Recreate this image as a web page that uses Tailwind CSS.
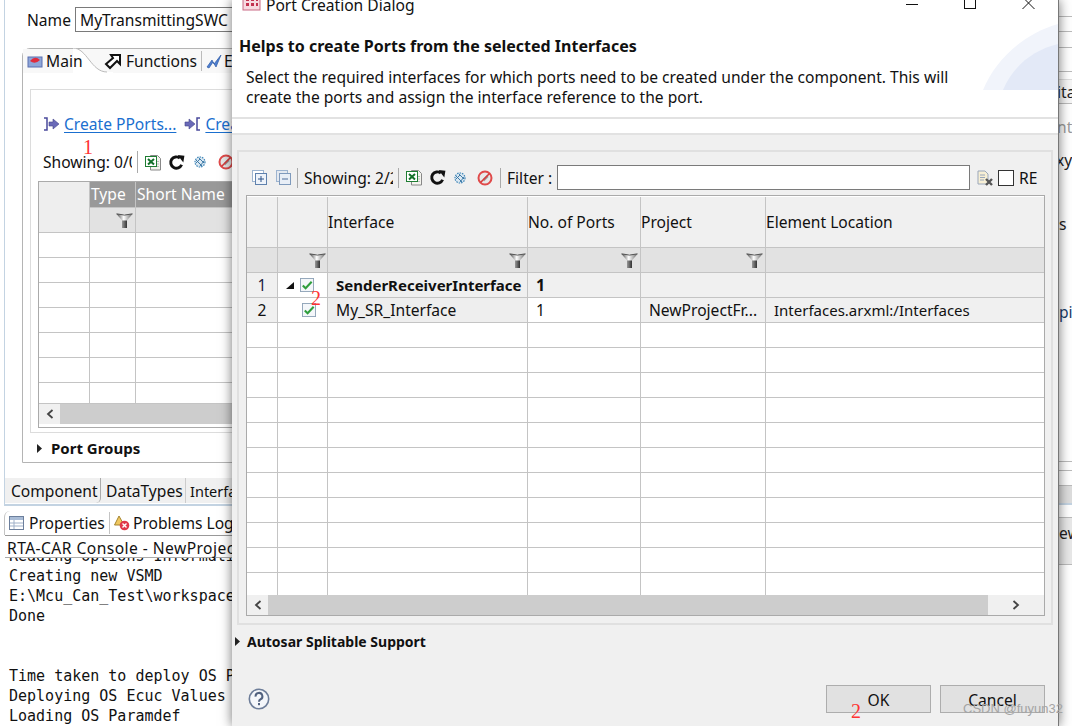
<!DOCTYPE html>
<html lang="en">
<head>
  <meta charset="UTF-8">
  <title>Port Creation Dialog</title>
  <script src="https://cdn.jsdelivr.net/npm/@tailwindcss/browser@4"></script>
</head>
<body class="bg-white">
  <!-- shared icons -->
  <svg class="absolute w-0 h-0">
    <defs>
      <linearGradient id="funnelGrad" x1="0" x2="1" y1="0" y2="0">
        <stop offset="0" stop-color="#444"/><stop offset="0.45" stop-color="#fff"/><stop offset="1" stop-color="#666"/>
      </linearGradient>
      <linearGradient id="stemGrad" x1="0" x2="1" y1="0" y2="0">
        <stop offset="0" stop-color="#999"/><stop offset="1" stop-color="#333"/>
      </linearGradient>
    </defs>
    <symbol id="funnel" viewBox="0 0 17 15">
      <path d="M0.5 1 L16.5 1 L10.5 8 L6.5 8 Z" fill="url(#funnelGrad)"/>
      <path d="M0.5 0.8 Q8.5 3.4 16.5 0.8" fill="none" stroke="#555" stroke-width="1"/>
      <rect x="6" y="7.5" width="5" height="7.5" fill="url(#stemGrad)"/>
    </symbol>
    <symbol id="excel" viewBox="0 0 17 17">
      <path d="M5.5 1.5 H12.5 L15.5 4.5 V16 H5.5 Z" fill="#f4f4ee" stroke="#888"/>
      <path d="M7 7.5 H14 M7 10 H14 M7 12.5 H14" stroke="#bbb"/>
      <rect x="0.5" y="2.5" width="11" height="10" fill="#fff" stroke="#1e7d32"/>
      <path d="M3 5 L9 10.5 M9 5 L3 10.5" stroke="#14702a" stroke-width="2"/>
    </symbol>
    <symbol id="refresh" viewBox="0 0 15 15">
      <path d="M12 9.5 A5 5 0 1 1 10.5 3.6" fill="none" stroke="#111" stroke-width="2.6"/>
      <path d="M8.5 0.8 L14.5 1.5 L13.5 7.5 Z" fill="#111"/>
    </symbol>
    <symbol id="hash" viewBox="0 0 12 12">
      <circle cx="6" cy="6" r="5" fill="#dbe8f2" stroke="#3f86b8" stroke-width="1.2" stroke-dasharray="1.5 1"/>
      <path d="M2 4 L8 10 M5 2 L10 7 M2 7 L6 3 M6 10 L10 5" stroke="#2f6f9f" stroke-width="0.9"/>
    </symbol>
    <symbol id="noentry" viewBox="0 0 16 16">
      <circle cx="8" cy="8" r="6.5" fill="#e8e8e8" stroke="#e04a4a" stroke-width="2"/>
      <path d="M6 9 L10 5 L11.5 7 L7 11.5 Z" fill="#999"/>
      <path d="M3.5 12.5 L12.5 3.5" stroke="#d83a3a" stroke-width="1.6"/>
    </symbol>
    <symbol id="check" viewBox="0 0 15 15">
      <rect x="0.5" y="0.5" width="14" height="14" fill="#f4f7fa" stroke="#8fa3b8"/>
      <path d="M3 8 L6 11 L12.5 4" fill="none" stroke="#2f9e3c" stroke-width="2.2"/>
    </symbol>
  </svg>

  <div class="relative flex w-[1072px] h-[726px] overflow-hidden bg-white text-[15.6px] text-[#111] font-['Noto_Sans','Open_Sans',sans-serif]">

    <!-- IDE behind the dialog, left part -->
    <div class="w-[232px] shrink-0 h-full overflow-hidden">
      <div class="ml-[4px] w-[400px] h-[506px] border-l border-b-2 border-[#c3d3e2] overflow-hidden">
        <div class="flex items-center h-[25px] mt-[7px] ml-[22px]">
          <span class="w-[48px] shrink-0 pt-[2px]">Name</span>
          <div class="w-[300px] h-[25px] border border-[#7a7a7a] pl-[4px] leading-[25px]">MyTransmittingSWC</div>
        </div>

        <!-- tab folder -->
        <div class="ml-[17px] mt-[16px] h-[415px] border border-[#b4b4b4] rounded-tl-[8px]">
          <div class="relative flex items-center h-[24px] bg-[#f8f8f8] whitespace-nowrap">
            <svg class="absolute left-[50px] top-[-1px]" width="40" height="26" viewBox="0 0 40 26"><path d="M0 0 C14 0 18 24 34 24 H40 V26 H0 Z" fill="#fff"/><path d="M0 0 C14 0 18 24 34 24" fill="none" stroke="#bbb"/></svg>
            <svg class="relative ml-[4px]" width="16" height="16" viewBox="0 0 16 16"><rect x="1" y="4" width="14" height="10" fill="#8ea6d8" stroke="#5a6fb0"/><path d="M3 8 Q8 2 13 7 Q8 12 3 8" fill="#e02b3c"/></svg>
            <span class="relative ml-[3px] w-[58px] pt-[2px]">Main</span>
            <svg class="relative" width="18" height="17" viewBox="0 0 18 17"><path d="M7 2 H16 V11 L13 8 L6 15 L2 11 L9 5 Z" fill="#fff" stroke="#111" stroke-width="2"/></svg>
            <span class="relative ml-[4px] w-[75px] pt-[2px]">Functions</span>
            <div class="w-px h-[20px] bg-[#bbb]"></div>
            <svg class="ml-[4px]" width="16" height="15" viewBox="0 0 16 15"><path d="M1 13 L6 6 L8 10 L15 1 L10 13 L7 8 L3 14 Z" fill="#4f7fd0" stroke="#2c5aa8" stroke-width="0.7"/></svg>
            <span class="ml-[2px] pt-[2px]">E</span>
          </div>

          <div class="ml-[7px] mt-[16px] h-[344px] border border-[#dcdcdc]">
            <div class="flex items-center h-[24px] mt-[22px] pl-[12px] whitespace-nowrap">
              <svg width="17" height="14" viewBox="0 0 17 14"><path d="M1 1 H4 V13 H1" fill="none" stroke="#4a4a9c" stroke-width="1.5"/><path d="M6 5 H10 V2 L16 7 L10 12 V9 H6 Z" fill="#6a6ab8" stroke="#44448c" stroke-width="0.6"/></svg>
              <span class="ml-[4px] pt-[2px] text-[#1a6fcf] underline underline-offset-2">Create PPorts...</span>
              <svg class="ml-[8px]" width="17" height="14" viewBox="0 0 17 14"><path d="M16 1 H13 V13 H16" fill="none" stroke="#4a4a9c" stroke-width="1.5"/><path d="M1 5 H5 V2 L11 7 L5 12 V9 H1 Z" fill="#6a6ab8" stroke="#44448c" stroke-width="0.6"/></svg>
              <span class="ml-[4px] pt-[2px] text-[#1a6fcf] underline underline-offset-2">Create RPorts...</span>
            </div>
            <div class="flex items-center h-[24px] mt-[14px] pl-[12px] whitespace-nowrap">
              <span class="w-[89px] shrink-0 overflow-hidden pt-[2px]">Showing: 0/0</span>
              <div class="w-px h-[22px] bg-[#aaa] ml-[5px]"></div>
              <svg class="ml-[7px]" width="17" height="17"><use href="#excel"/></svg>
              <svg class="ml-[6px]" width="17" height="17"><use href="#refresh"/></svg>
              <svg class="ml-[9px]" width="12" height="12"><use href="#hash"/></svg>
              <svg class="ml-[12px]" width="16" height="16"><use href="#noentry"/></svg>
            </div>

            <div class="ml-[7px] mt-[7px] h-[247px] border border-[#aaa] overflow-hidden w-[300px]">
              <table class="table-fixed border-separate border-spacing-0 w-[400px] [&_td]:border-r [&_td]:border-b [&_td]:border-[#c4c4c4]">
                <colgroup><col class="w-[51px]"><col class="w-[46px]"><col class="w-[303px]"></colgroup>
                <tr class="h-[26px] text-white">
                  <td rowspan="2" class="bg-[#eee]"></td>
                  <td class="bg-[#999] px-px">Type</td>
                  <td class="bg-[#999] px-px">Short Name</td>
                </tr>
                <tr class="h-[25px] bg-[#e2e2e2]">
                  <td><svg class="ml-auto mr-[2px]" width="17" height="15"><use href="#funnel"/></svg></td>
                  <td></td>
                </tr>
                <tr class="h-[25px]"><td></td><td></td><td></td></tr>
                <tr class="h-[25px]"><td></td><td></td><td></td></tr>
                <tr class="h-[25px]"><td></td><td></td><td></td></tr>
                <tr class="h-[25px]"><td></td><td></td><td></td></tr>
                <tr class="h-[25px]"><td></td><td></td><td></td></tr>
                <tr class="h-[25px]"><td></td><td></td><td></td></tr>
                <tr class="h-[21px]"><td></td><td></td><td></td></tr>
              </table>
              <div class="flex h-[20px] bg-[#f0f0f0]">
                <div class="w-[21px] flex items-center justify-center">
                  <svg width="8" height="10" viewBox="0 0 8 10"><path d="M6.5 1 L2 5 L6.5 9" fill="none" stroke="#444" stroke-width="1.8"/></svg>
                </div>
                <div class="flex-1 bg-[#cdcdcd]"></div>
              </div>
            </div>
          </div>

          <div class="flex items-center h-[20px] mt-[5px] pl-[14px] whitespace-nowrap">
            <svg width="5" height="9" viewBox="0 0 5 9"><path d="M0 0 L5 4.5 L0 9 Z" fill="#222"/></svg>
            <span class="ml-[9px] text-[15px] font-bold">Port Groups</span>
          </div>
        </div>

        <!-- editor tabs at the bottom -->
        <div class="flex items-center h-[25px] mt-[15px] bg-[#f0f0f0] whitespace-nowrap">
          <span class="w-[96px] pl-[6px] leading-[27px] h-[25px] border-r border-[#aaa] rounded-br-[5px]">Component</span>
          <span class="w-[85px] pl-[5px] leading-[27px] h-[25px] border-r border-[#ccc]">DataTypes</span>
          <span class="pl-[4px] pt-[2px] text-[14.5px]">Interfaces</span>
        </div>
      </div>

      <!-- console view -->
      <div class="ml-[4px] mt-[5px] flex items-center h-[24px] w-[400px] border-l border-[#c4c4c4] rounded-tl-[6px] whitespace-nowrap">
        <svg class="ml-[4px]" width="15" height="14" viewBox="0 0 15 14"><rect x="0.5" y="0.5" width="14" height="13" fill="#fff" stroke="#6c7f9c"/><rect x="1" y="1" width="13" height="3" fill="#a9bcd6"/><path d="M1 7 H14 M1 10 H14 M5 4 V13" stroke="#9fb0c8"/></svg>
        <span class="ml-[5px] w-[80px] pt-[2px]">Properties</span>
        <div class="w-px h-[22px] bg-[#c4c4c4]"></div>
        <svg class="ml-[4px]" width="16" height="16" viewBox="0 0 16 16"><path d="M5 1 L10 10 H0.5 Z" fill="#f0c860" stroke="#a5852f"/><circle cx="10.5" cy="10.5" r="4.8" fill="#e0374a"/><path d="M8.5 8.5 L12.5 12.5 M12.5 8.5 L8.5 12.5" stroke="#fff" stroke-width="1.4"/></svg>
        <span class="ml-[3px] pt-[2px]">Problems Log</span>
      </div>
      <div class="ml-[5px] w-[400px] h-[23px] border-t border-b border-t-[#999] border-b-[#aaa] pl-[2px] leading-[24px] tracking-[0.45px] whitespace-nowrap">RTA-CAR Console - NewProjectFromScratch</div>
      <div class="h-[168px] overflow-hidden pl-[9px] text-[15px] font-['DejaVu_Sans_Mono',monospace] leading-[20px] whitespace-nowrap w-[400px]">
        <div class="mt-[-12px]">Reading options Information</div>
        <div>Creating new VSMD</div>
        <div>E:\Mcu_Can_Test\workspace\New</div>
        <div>Done</div>
        <div class="h-[40px]"></div>
        <div>Time taken to deploy OS Par</div>
        <div>Deploying OS Ecuc Values</div>
        <div>Loading OS Paramdef</div>
      </div>
    </div>

    <!-- dialog -->
    <div class="relative z-10 w-[827px] shrink-0 h-full flex flex-col bg-white border-r border-[#777] shadow-[0_0_11px_rgba(0,0,0,0.55)]">
      <div class="flex items-center h-[12px] whitespace-nowrap">
        <svg class="ml-[9px] shrink-0" width="20" height="20" viewBox="0 0 20 20"><rect x="2" y="-2" width="17" height="16" fill="#f7d9e1" stroke="#c96b85"/><path d="M5 2 H8 V5 H5 Z M10 2 H13 V5 H10 Z M15 2 H17 V5 H15 Z M5 7 H8 V10 H5 Z M10 7 H13 V10 H10 Z M15 7 H17 V10 H15 Z" fill="#c2304f"/></svg>
        <span class="ml-[5px] mt-[-1px]">Port Creation Dialog</span>
        <div class="ml-auto mr-[23px] flex items-center gap-[46px]">
          <div class="w-[12px] h-px bg-[#111] mt-[-4px]"></div>
          <div class="w-[12px] h-[16px] border border-[#111] mt-[-10px]"></div>
          <svg class="mt-[-10px]" width="13" height="18" viewBox="0 0 13 18"><path d="M0.5 5 L12.5 17 M12.5 5 L0.5 17" stroke="#111"/></svg>
        </div>
      </div>

      <div class="relative h-[105px] shrink-0">
        <svg class="absolute right-0 top-[12px]" width="75" height="66" viewBox="0 0 75 66"><path d="M0 66 C12 36 40 10 75 0 V66 Z" fill="#f1f4fb"/><path d="M20 66 C30 42 50 26 75 20 V66 Z" fill="#e3e9f7"/></svg>
        <h2 class="relative pl-[7px] pt-[24px] text-[16px] leading-[20px] font-bold">Helps to create Ports from the selected Interfaces</h2>
        <p class="relative pl-[14px] pt-[11px] leading-[20px] whitespace-nowrap">Select the required interfaces for which ports need to be created under the component. This will<br>create the ports and assign the interface reference to the port.</p>
      </div>
      <div class="h-[18px] shrink-0 border-y-2 border-[#e2e2e2]"></div>

      <div class="flex-1 flex flex-col bg-[#f0f0f0]">
        <div class="mx-[5px] mt-[15px] h-[475px] border-2 border-[#e0e0e0] flex flex-col">
          <!-- toolbar -->
          <div class="flex items-center h-[25px] mt-[13px] shrink-0 whitespace-nowrap">
            <svg class="ml-[13px] shrink-0" width="15" height="15" viewBox="0 0 15 15"><rect x="0.5" y="0.5" width="11" height="11" fill="#fff" stroke="#9db4d0"/><rect x="3.5" y="3.5" width="11" height="11" fill="#eef3fa" stroke="#5f81ad"/><path d="M6 9 H12 M9 6 V12" stroke="#2c5288"/></svg>
            <svg class="ml-[9px] shrink-0" width="15" height="15" viewBox="0 0 15 15"><rect x="0.5" y="0.5" width="11" height="11" fill="#e4e9f0" stroke="#9db4d0"/><rect x="3.5" y="3.5" width="11" height="11" fill="#e8eef6" stroke="#7f9abc"/><path d="M6 9 H12" stroke="#4c6d99"/></svg>
            <div class="w-px h-[20px] bg-[#aaa] ml-[6px] shrink-0"></div>
            <span class="ml-[6px] w-[89px] shrink-0 overflow-hidden pt-[2px]">Showing: 2/2</span>
            <div class="w-px h-[20px] bg-[#aaa] ml-[5px] shrink-0"></div>
            <svg class="ml-[7px] shrink-0" width="17" height="17"><use href="#excel"/></svg>
            <svg class="ml-[6px] shrink-0" width="17" height="17"><use href="#refresh"/></svg>
            <svg class="ml-[8px] shrink-0" width="12" height="12"><use href="#hash"/></svg>
            <svg class="ml-[11px] shrink-0" width="16" height="16"><use href="#noentry"/></svg>
            <div class="w-px h-[20px] bg-[#aaa] ml-[7px] shrink-0"></div>
            <span class="ml-[6px] w-[50px] shrink-0 pt-[2px]">Filter :</span>
            <div class="w-[413px] h-[25px] shrink-0 border border-[#7a7a7a] bg-white"></div>
            <svg class="ml-[7px] shrink-0" width="16" height="16" viewBox="0 0 16 16"><path d="M1 1 H8 L11 4 V14 H1 Z" fill="#f7efd5" stroke="#9aa7bb"/><path d="M3 5 H8 M3 7.5 H8 M3 10 H7" stroke="#9aa7bb"/><path d="M9 9 L15 15 M15 9 L9 15" stroke="#555" stroke-width="2.4"/></svg>
            <div class="ml-[5px] w-[16px] h-[16px] shrink-0 border border-[#333] bg-white"></div>
            <span class="ml-[5px] pt-[2px]">RE</span>
          </div>

          <!-- interface table -->
          <div class="ml-[7px] mt-[5px] w-[799px] h-[421px] border border-[#aaa] flex flex-col overflow-hidden">
            <div class="flex-1 overflow-hidden bg-white border-t border-white">
              <table class="table-fixed border-separate border-spacing-0 w-[797px] [&_td]:leading-[20px] [&_td]:border-r [&_td]:border-b [&_td]:border-[#c4c4c4] [&_td:last-child]:border-r-0 [&_td]:whitespace-nowrap [&_td]:overflow-hidden">
                <colgroup><col class="w-[31px]"><col class="w-[50px]"><col class="w-[200px]"><col class="w-[113px]"><col class="w-[125px]"><col class="w-[278px]"></colgroup>
                <tr class="h-[51px] bg-[#f0f0f0]"><td></td><td></td><td class="px-0">Interface</td><td>No. of Ports</td><td>Project</td><td>Element Location</td></tr>
                <tr class="h-[25px] bg-[#e2e2e2]">
                  <td></td>
                  <td><svg class="ml-auto mr-[1px]" width="17" height="15"><use href="#funnel"/></svg></td>
                  <td><svg class="ml-auto mr-[1px]" width="17" height="15"><use href="#funnel"/></svg></td>
                  <td><svg class="ml-auto mr-[2px]" width="17" height="15"><use href="#funnel"/></svg></td>
                  <td><svg class="ml-auto mr-[2px]" width="17" height="15"><use href="#funnel"/></svg></td>
                  <td></td>
                </tr>
                <tr class="h-[25px] bg-[#f0f0f0]">
                  <td class="text-center text-[#224]">1</td>
                  <td class="bg-white"><div class="flex items-center"><svg class="ml-[8px]" width="8" height="7" viewBox="0 0 8 7"><path d="M8 0 V7 H0 Z" fill="#111"/></svg><svg class="ml-[6px]" width="14" height="14"><use href="#check"/></svg></div></td>
                  <td class="pl-[8px] text-[15px] font-bold">SenderReceiverInterface</td>
                  <td class="pl-[8px] text-[16px] font-bold">1</td>
                  <td></td><td></td>
                </tr>
                <tr class="h-[25px]">
                  <td class="text-center bg-[#f0f0f0]">2</td>
                  <td><svg class="ml-[24px]" width="14" height="14"><use href="#check"/></svg></td>
                  <td class="pl-[8px] bg-[#eee]">My_SR_Interface</td>
                  <td class="pl-[8px]">1</td>
                  <td class="pl-[8px] bg-[#f0f0f0]">NewProjectFr...</td>
                  <td class="pl-[8px] text-[15px] bg-[#f0f0f0]">Interfaces.arxml:/Interfaces</td>
                </tr>
                <tr class="h-[25px]"><td></td><td></td><td></td><td></td><td></td><td></td></tr>
                <tr class="h-[25px]"><td></td><td></td><td></td><td></td><td></td><td></td></tr>
                <tr class="h-[25px]"><td></td><td></td><td></td><td></td><td></td><td></td></tr>
                <tr class="h-[25px]"><td></td><td></td><td></td><td></td><td></td><td></td></tr>
                <tr class="h-[25px]"><td></td><td></td><td></td><td></td><td></td><td></td></tr>
                <tr class="h-[25px]"><td></td><td></td><td></td><td></td><td></td><td></td></tr>
                <tr class="h-[25px]"><td></td><td></td><td></td><td></td><td></td><td></td></tr>
                <tr class="h-[25px]"><td></td><td></td><td></td><td></td><td></td><td></td></tr>
                <tr class="h-[25px]"><td></td><td></td><td></td><td></td><td></td><td></td></tr>
                <tr class="h-[25px]"><td></td><td></td><td></td><td></td><td></td><td></td></tr>
                <tr class="h-[25px]"><td></td><td></td><td></td><td></td><td></td><td></td></tr>
              </table>
            </div>
            <div class="flex h-[20px] shrink-0 bg-[#f0f0f0]">
              <div class="w-[21px] flex items-center justify-center">
                <svg width="8" height="10" viewBox="0 0 8 10"><path d="M6.5 1 L2 5 L6.5 9" fill="none" stroke="#444" stroke-width="1.8"/></svg>
              </div>
              <div class="w-[720px] bg-[#cdcdcd]"></div>
              <div class="flex-1 flex items-center justify-center">
                <svg width="8" height="10" viewBox="0 0 8 10"><path d="M1.5 1 L6 5 L1.5 9" fill="none" stroke="#444" stroke-width="1.8"/></svg>
              </div>
            </div>
          </div>
        </div>

        <div class="flex items-center h-[20px] mt-[6px] pl-[3px]">
          <svg width="5" height="9" viewBox="0 0 5 9"><path d="M0 0 L5 4.5 L0 9 Z" fill="#222"/></svg>
          <span class="ml-[7px] text-[14px] font-bold">Autosar Splitable Support</span>
        </div>

        <div class="flex items-center mt-[34px] h-[28px]">
          <svg class="ml-[16px]" width="22" height="22" viewBox="0 0 22 22"><circle cx="11" cy="11" r="9.7" fill="#f4f6fa" stroke="#6d7d99" stroke-width="1.6"/><path d="M7.6 8.6 A3.4 3.4 0 1 1 12.4 11.4 Q11 12.2 11 13.8" fill="none" stroke="#51617f" stroke-width="2"/><rect x="10" y="15" width="2" height="2.2" fill="#51617f"/></svg>
          <div class="ml-auto mr-[13px] flex gap-[9px]">
            <div class="w-[105px] h-[28px] border border-[#adadad] bg-[#e1e1e1] text-center leading-[28px]">OK</div>
            <div class="w-[105px] h-[28px] border border-[#adadad] bg-[#e1e1e1] text-center leading-[28px]">Cancel</div>
          </div>
        </div>
      </div>
    </div>

    <!-- IDE behind the dialog, right part -->
    <div class="flex-1 h-full overflow-hidden whitespace-nowrap text-[#222]">
      <div class="h-[17px] border-b border-[#bbb]"></div>
      <div class="h-[15px] border-b border-[#bbb]"></div>
      <div class="h-[16px] border-b border-[#bbb]"></div>
      <div class="h-[24px] border-b border-[#bbb]"></div>
      <div class="h-[8px] border-b border-[#ddd]"></div>
      <div class="h-[24px] border-b border-[#bbb] leading-[24px] -ml-[2px] bg-[#f6f6f6]">itan</div>
      <div class="h-[46px] leading-[46px] -ml-[2px] text-[#999]">ntity</div>
      <div class="h-[20px] leading-[20px] -ml-[12px]">oxy</div>
      <div class="h-[65px] pt-[44px] leading-[20px]">s</div>
      <div class="h-[87px] pt-[67px] leading-[20px] text-[#1a3d6a]">pi</div>
      <div class="h-[140px] border-b border-[#bbb]"></div>
      <div class="h-[9px] border-b border-[#bbb]"></div>
      <div class="h-[15px] border-b border-[#bbb]"></div>
      <div class="h-[17px] bg-[#ddd]"></div>
      <div class="h-[2px] bg-[#c3d3e2]"></div>
      <div class="h-[13px] border-b border-[#bbb]"></div>
      <div class="h-[47px] border-b border-[#bbb] bg-[#e8e8e8] leading-[28px] pt-[1px]">ew</div>
    </div>

    <!-- annotations and watermark over the screenshot -->
    <span class="absolute left-[83px] top-[135px] z-20 text-[20px] leading-[24px] text-[#f33] font-['Liberation_Serif',serif]">1</span>
    <span class="absolute left-[311px] top-[286px] z-20 text-[20px] leading-[24px] text-[#f33] font-['Liberation_Serif',serif]">2</span>
    <span class="absolute left-[851px] top-[699px] z-20 text-[20px] leading-[24px] text-[#f33] font-['Liberation_Serif',serif]">2</span>
    <span class="absolute left-[963px] top-[699px] z-20 text-[13px] leading-[20px] whitespace-nowrap text-[#a4a4a4] font-['Liberation_Sans',sans-serif]">CSDN @fuyun32</span>
  </div>
</body>
</html>
